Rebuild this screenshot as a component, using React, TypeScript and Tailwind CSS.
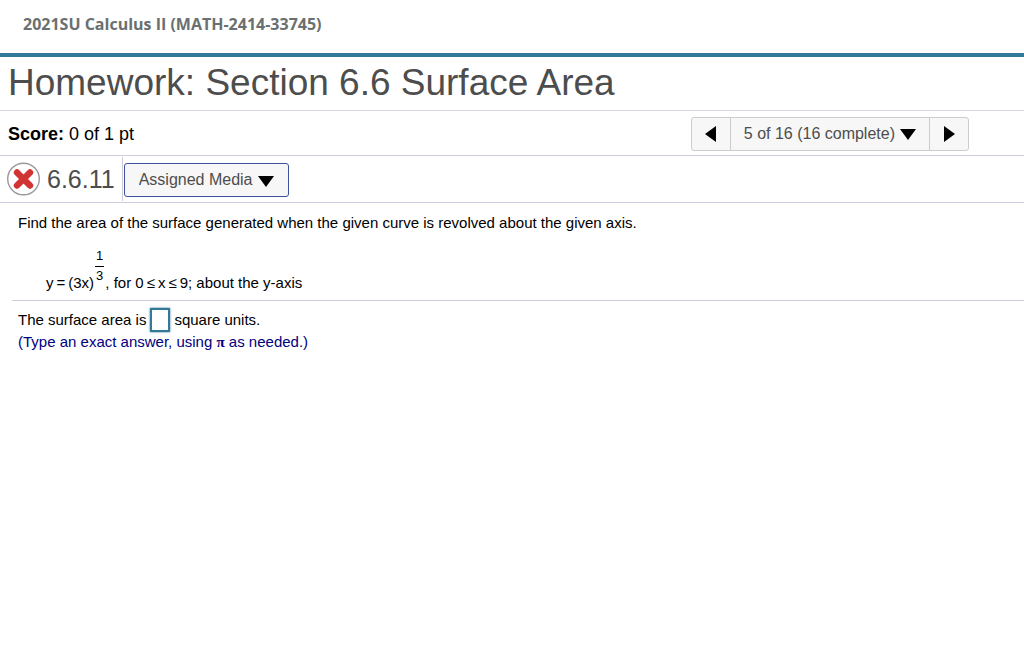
import React, { useState } from 'react';

interface TriangleProps {
  direction: 'left' | 'right' | 'down';
  className?: string;
}

const trianglePoints = {
  left: '11,0 11,16 0,8',
  right: '0,0 0,16 11,8',
  down: '0,0 16,0 8,11',
};

function Triangle({ direction, className = '' }: TriangleProps) {
  const isDown = direction === 'down';
  const width = isDown ? 16 : 11;
  const height = isDown ? 11 : 16;

  return (
    <svg width={width} height={height} viewBox={`0 0 ${width} ${height}`} className={className} aria-hidden="true">
      <polygon points={trianglePoints[direction]} fill="#000" />
    </svg>
  );
}

function IncorrectIcon() {
  return (
    <svg width="34" height="34" viewBox="0 0 34 34" role="img" aria-label="Incorrect">
      <circle cx="17.5" cy="17" r="15.8" fill="#fff" stroke="#999" strokeWidth="1.4" />
      <path d="M11 10.5L24 23.5M24 10.5L11 23.5" stroke="#d03433" strokeWidth="6.4" strokeLinecap="round" />
    </svg>
  );
}

const TOTAL = 16;

function QuestionNav() {
  const [current, setCurrent] = useState(5);
  const questions = Array.from({ length: TOTAL }, (_, i) => i + 1);

  return (
    <nav className="flex h-[34px] rounded-[3px] border border-[#ccc] bg-[#f7f7f7]" aria-label="Questions">
      <button
        type="button"
        aria-label="Previous question"
        className="flex w-[38px] items-center justify-center"
        onClick={() => setCurrent(Math.max(1, current - 1))}
      >
        <Triangle direction="left" />
      </button>
      <div className="relative flex border-x border-[#ccc]">
        <select
          aria-label="Question"
          value={current}
          onChange={(e) => setCurrent(Number(e.target.value))}
          className="[field-sizing:content] appearance-none pr-[34px] pl-[13px] text-base text-[#4d4d4d] outline-none"
        >
          {questions.map((n) => (
            <option key={n} value={n}>{`${n} of ${TOTAL} (16 complete)`}</option>
          ))}
        </select>
        <Triangle direction="down" className="pointer-events-none absolute top-[11px] right-[13px]" />
      </div>
      <button
        type="button"
        aria-label="Next question"
        className="flex w-[38px] items-center justify-center"
        onClick={() => setCurrent(Math.min(TOTAL, current + 1))}
      >
        <Triangle direction="right" />
      </button>
    </nav>
  );
}

function Operator({ children }: { children: React.ReactNode }) {
  return <span className="px-[3px]">{children}</span>;
}

function Problem() {
  const [answer, setAnswer] = useState('');

  return (
    <main className="text-[15px] leading-[22px] text-black">
      <section className="px-[18px] pt-[9px] pb-[6px]">
        <p>Find the area of the surface generated when the given curve is revolved about the given axis.</p>
        <div className="flex items-end pt-[14px] pl-7">
          <span>
            y<Operator>=</Operator>(3x)
          </span>
          <span className="mb-[10px] flex flex-col items-center px-px text-[13px] leading-4">
            <span className="border-b border-black px-px pb-[2px]">1</span>
            <span className="px-px pt-px">3</span>
          </span>
          <span>
            , for 0<Operator>≤</Operator>x<Operator>≤</Operator>9; about the y-axis
          </span>
        </div>
      </section>
      <section className="ml-3 border-t border-[#ccd] px-[6px] pt-[7px]">
        <div className="flex items-center gap-1">
          <label htmlFor="answer">The surface area is</label>
          <input
            id="answer"
            type="text"
            value={answer}
            onChange={(e) => setAnswer(e.target.value)}
            className="h-6 w-5 border-2 border-[#317a99] bg-white text-center shadow-[0_0_2px_#317a99] outline-none"
          />
          <span>square units.</span>
        </div>
        <p className="leading-5 text-[#000080]">
          (Type an exact answer, using <span className="font-['Liberation_Serif',serif] font-bold">π</span> as needed.)
        </p>
      </section>
    </main>
  );
}

export default function App() {
  return (
    <div className="min-h-screen bg-white font-['Liberation_Sans',Arial,sans-serif]">
      <header className="border-b-4 border-[#317a99] px-[23px] pt-3 pb-[17px]">
        <p className="font-['Open_Sans',sans-serif] text-base leading-6 font-bold text-[#6a7070]">
          2021SU Calculus II (MATH-2414-33745)
        </p>
      </header>

      <div className="border-b border-[#d5d8e0] px-2 pb-px">
        <h1 className="text-[37px] leading-[52px] text-[#4d4d4d]">Homework: Section 6.6 Surface Area</h1>
      </div>

      <div className="flex items-center justify-between border-b border-[#ccd] pt-[6px] pr-[55px] pb-1 pl-2">
        <p className="text-lg text-black">
          <strong>Score:</strong> 0 of 1 pt
        </p>
        <QuestionNav />
      </div>

      <div className="flex items-center border-b border-[#ccd] py-px pl-[6px]">
        <IncorrectIcon />
        <h2 className="px-[7px] text-[25px] leading-8 text-[#4d4d4d]">6.6.11</h2>
        <div className="flex border-l border-[#ccd] pt-[6px] pb-1 pl-px">
          <div className="relative flex">
            <select
              aria-label="Assigned Media"
              className="h-[34px] appearance-none rounded-[3px] border border-[#4050a0] bg-[#f7f7f7] pr-[35px] pl-[14px] text-base text-[#4d4d4d] outline-none"
            >
              <option>Assigned Media</option>
            </select>
            <Triangle direction="down" className="pointer-events-none absolute top-[13px] right-[15px]" />
          </div>
        </div>
      </div>

      <Problem />
    </div>
  );
}
